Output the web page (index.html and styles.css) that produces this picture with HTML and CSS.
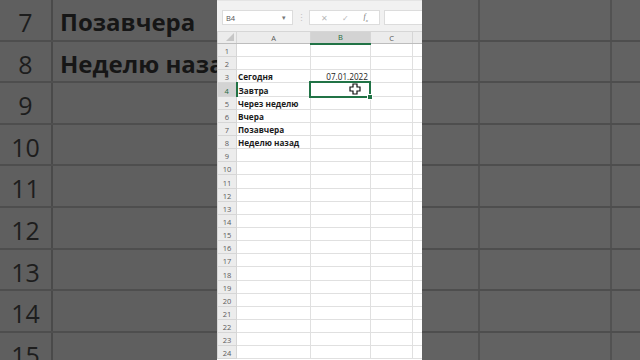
FILE: index.html
```html
<!DOCTYPE html>
<html lang="ru">
<head>
  <meta charset="UTF-8" />
  <title>Excel — даты</title>
  <link rel="stylesheet" href="styles.css">
</head>
<body>

  <!-- Увеличенный фон слева -->
  <div class="fon fon-left">
    <div class="fon-row"><div class="fon-num">7</div><div class="fon-val">Позавчера</div></div>
    <div class="fon-row"><div class="fon-num">8</div><div class="fon-val">Неделю назад</div></div>
    <div class="fon-row"><div class="fon-num">9</div><div class="fon-val"></div></div>
    <div class="fon-row"><div class="fon-num">10</div><div class="fon-val"></div></div>
    <div class="fon-row"><div class="fon-num">11</div><div class="fon-val"></div></div>
    <div class="fon-row"><div class="fon-num">12</div><div class="fon-val"></div></div>
    <div class="fon-row"><div class="fon-num">13</div><div class="fon-val"></div></div>
    <div class="fon-row"><div class="fon-num">14</div><div class="fon-val"></div></div>
    <div class="fon-row"><div class="fon-num">15</div><div class="fon-val"></div></div>
  </div>

  <!-- Лист Excel -->
  <div class="hoja">
    <div class="formula">
      <div class="namebox">B4<span class="drop">▾</span></div>
      <div class="dots">⋮</div>
      <div class="fxbox">
        <span class="ico">✕</span>
        <span class="ico">✓</span>
        <span class="ico fx">f<sub>x</sub></span>
      </div>
      <div class="input"></div>
    </div>

    <table class="grid">
      <colgroup>
        <col class="c-rh"><col class="c-a"><col class="c-b"><col class="c-c"><col class="c-d">
      </colgroup>
      <tr class="head">
        <th class="corner"></th><th>A</th><th class="sel-col">B</th><th>C</th><th></th>
      </tr>
      <tr><th>1</th><td></td><td></td><td></td><td></td></tr>
      <tr><th>2</th><td></td><td></td><td></td><td></td></tr>
      <tr><th>3</th><td class="txt">Сегодня</td><td class="num">07.01.2022</td><td></td><td></td></tr>
      <tr>
        <th class="sel-row">4</th><td class="txt">Завтра</td>
        <td class="activa">
          <svg class="cursor" width="12" height="12" viewBox="0 0 12 12">
            <path d="M4 1h4v3h3v4h-3v3h-4v-3h-3v-4h3z" fill="#fff" stroke="#111" stroke-width="1.2"/>
          </svg>
        </td>
        <td></td><td></td>
      </tr>
      <tr><th>5</th><td class="txt">Через неделю</td><td></td><td></td><td></td></tr>
      <tr><th>6</th><td class="txt">Вчера</td><td></td><td></td><td></td></tr>
      <tr><th>7</th><td class="txt">Позавчера</td><td></td><td></td><td></td></tr>
      <tr><th>8</th><td class="txt">Неделю назад</td><td></td><td></td><td></td></tr>
      <tr><th>9</th><td></td><td></td><td></td><td></td></tr>
      <tr><th>10</th><td></td><td></td><td></td><td></td></tr>
      <tr><th>11</th><td></td><td></td><td></td><td></td></tr>
      <tr><th>12</th><td></td><td></td><td></td><td></td></tr>
      <tr><th>13</th><td></td><td></td><td></td><td></td></tr>
      <tr><th>14</th><td></td><td></td><td></td><td></td></tr>
      <tr><th>15</th><td></td><td></td><td></td><td></td></tr>
      <tr><th>16</th><td></td><td></td><td></td><td></td></tr>
      <tr><th>17</th><td></td><td></td><td></td><td></td></tr>
      <tr><th>18</th><td></td><td></td><td></td><td></td></tr>
      <tr><th>19</th><td></td><td></td><td></td><td></td></tr>
      <tr><th>20</th><td></td><td></td><td></td><td></td></tr>
      <tr><th>21</th><td></td><td></td><td></td><td></td></tr>
      <tr><th>22</th><td></td><td></td><td></td><td></td></tr>
      <tr><th>23</th><td></td><td></td><td></td><td></td></tr>
      <tr><th>24</th><td></td><td></td><td></td><td></td></tr>
    </table>
  </div>

  <!-- Увеличенный фон справа -->
  <div class="fon fon-right">
    <div class="fon-row"><div class="fon-c1"></div><div class="fon-c2"></div><div></div></div>
    <div class="fon-row"><div class="fon-c1"></div><div class="fon-c2"></div><div></div></div>
    <div class="fon-row"><div class="fon-c1"></div><div class="fon-c2"></div><div></div></div>
    <div class="fon-row"><div class="fon-c1"></div><div class="fon-c2"></div><div></div></div>
    <div class="fon-row"><div class="fon-c1"></div><div class="fon-c2"></div><div></div></div>
    <div class="fon-row"><div class="fon-c1"></div><div class="fon-c2"></div><div></div></div>
    <div class="fon-row"><div class="fon-c1"></div><div class="fon-c2"></div><div></div></div>
    <div class="fon-row"><div class="fon-c1"></div><div class="fon-c2"></div><div></div></div>
    <div class="fon-row"><div class="fon-c1"></div><div class="fon-c2"></div><div></div></div>
  </div>

</body>
</html>
```

FILE: styles.css
```css
body {
  margin: 0;
  width: 640px;
  height: 360px;
  overflow: hidden;
  display: flex;
  background-color: #5f5f5f;
  font-family: 'Open Sans', 'Noto Sans', sans-serif;
}

/* ---- фон ---- */

.fon {
  height: 360px;
  overflow: hidden;
  background-color: #5f5f5f;
}

.fon-left {
  width: 217px;
}

.fon-right {
  flex: 1;
  background-color: #626262;
}

.fon-row {
  display: flex;
  height: 41.6px;
  box-sizing: border-box;
  border-bottom: 2px solid #4e4e4e;
}

.fon-num {
  width: 53px;
  flex: none;
  box-sizing: border-box;
  border-right: 2px solid #4a4a4a;
  text-align: center;
  font-size: 25px;
  line-height: 44px;
  color: #1d1d1d;
}

.fon-val {
  padding-left: 7px;
  font-size: 24px;
  font-weight: bold;
  line-height: 44px;
  white-space: nowrap;
  color: #161616;
}

.fon-c1 {
  width: 56px;
  flex: none;
  border-right: 2px solid #525252;
}

.fon-c2 {
  width: 130px;
  flex: none;
  border-right: 2px solid #525252;
}

/* ---- лист ---- */

.hoja {
  width: 205px;
  flex: none;
  background-color: #fff;
  overflow: hidden;
}

.formula {
  height: 31px;
  box-sizing: border-box;
  padding: 9px 0 0 5px;
  background-color: #f1f1f1;
  border-top: 1px solid #e4e4e4;
  display: flex;
  align-items: flex-start;
}

.namebox,
.fxbox,
.input {
  height: 15px;
  box-sizing: border-box;
  background-color: #fff;
  border: 1px solid #dcdcdc;
}

.namebox {
  width: 71px;
  display: flex;
  justify-content: space-between;
  align-items: center;
  padding: 0 6px 0 3px;
  font-size: 7.5px;
  color: #555;
}

.drop {
  font-size: 7px;
  color: #777;
}

.dots {
  width: 16px;
  text-align: center;
  font-size: 9px;
  line-height: 15px;
  color: #c4c4c4;
}

.fxbox {
  width: 71px;
  display: flex;
  justify-content: space-around;
  align-items: center;
  padding: 0 4px;
}

.ico {
  font-size: 8px;
  color: #b8b8b8;
}

.fx {
  font-family: 'Liberation Serif', serif;
  font-style: italic;
  color: #777;
}

.fx sub {
  font-size: 5px;
}

.input {
  flex: 1;
  margin-left: 4px;
  border-right: none;
}

.grid {
  border-collapse: collapse;
  table-layout: fixed;
  width: 205px;
}

.c-rh { width: 19px; }
.c-a { width: 74px; }
.c-b { width: 60px; }
.c-c { width: 42px; }
.c-d { width: 10px; }

.grid tr {
  height: 13.15px;
}

.grid tr.head {
  height: 12px;
}

.grid th,
.grid td {
  padding: 0;
  border: 1px solid #e0e0e0;
  font-size: 7.5px;
  line-height: 10px;
  white-space: nowrap;
  overflow: hidden;
  vertical-align: bottom;
}

.grid th {
  background-color: #ececec;
  border-color: #d6d6d6;
  font-weight: normal;
  color: #5a5a5a;
}

.head th {
  vertical-align: middle;
  border-bottom-color: #bdbdbd;
}

.grid th.corner {
  position: relative;
}

.corner::after {
  content: "";
  position: absolute;
  right: 2px;
  bottom: 2px;
  border-left: 8px solid transparent;
  border-bottom: 8px solid #c6c6c6;
}

.grid th.sel-col {
  background-color: #d3d3d3;
  border-bottom: 2px solid #217346;
  color: #1e6b40;
}

.grid th.sel-row {
  background-color: #d3d3d3;
  border-right: 2px solid #217346;
  color: #1e6b40;
}

.grid td.txt {
  padding-left: 1px;
  font-weight: bold;
  font-size: 8.2px;
  color: #1b1b1b;
}

.grid td.num {
  padding-right: 2px;
  text-align: right;
  font-size: 8.2px;
  color: #1b1b1b;
}

.grid td.activa {
  position: relative;
  overflow: visible;
}

.activa::before {
  content: "";
  position: absolute;
  left: -2px;
  top: -2px;
  right: -1px;
  bottom: -2px;
  border: 2px solid #217346;
}

.activa::after {
  content: "";
  position: absolute;
  right: -3px;
  bottom: -4px;
  width: 4px;
  height: 4px;
  background-color: #217346;
  border: 1px solid #fff;
}

.cursor {
  position: absolute;
  left: 38px;
  top: 0;
}
```
